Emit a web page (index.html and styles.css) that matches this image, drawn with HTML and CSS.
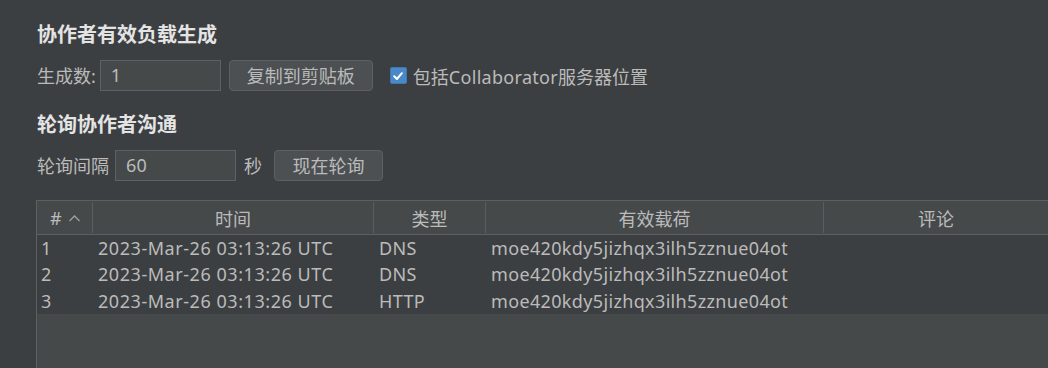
FILE: index.html
```html
<!DOCTYPE html>
<html lang="zh">
<head>
<meta charset="utf-8">
<link rel="stylesheet" href="styles.css">
</head>
<body>
<div class="page">
  <h2 class="title t1">协作者有效负载生成</h2>
  <div class="row r1">
    <span class="label">生成数:</span>
    <div class="input in1">1</div>
    <button class="btn b1">复制到剪贴板</button>
    <label class="check">
      <span class="box"><svg width="12" height="12" viewBox="0 0 12 12"><path d="M2.2 6.3 L4.9 9 L9.9 3.2" fill="none" stroke="#fff" stroke-width="2" stroke-linecap="round" stroke-linejoin="round"/></svg></span>
      <span class="clabel">包括<span class="lat">Collaborator</span>服务器位置</span>
    </label>
  </div>
  <h2 class="title t2">轮询协作者沟通</h2>
  <div class="row r2">
    <span class="label">轮询间隔</span>
    <div class="input in2">60</div>
    <span class="label sec">秒</span>
    <button class="btn b2">现在轮询</button>
  </div>
  <div class="table">
    <div class="thead">
      <div class="th c1"><span class="lat">#</span><svg class="sort" width="13" height="8" viewBox="0 0 13 8"><path d="M1.5 7 L6.5 2 L11.5 7" fill="none" stroke="#a0a0a0" stroke-width="1.3"/></svg></div>
      <div class="th c2">时间</div>
      <div class="th c3">类型</div>
      <div class="th c4">有效载荷</div>
      <div class="th c5">评论</div>
    </div>
    <div class="tbody">
      <div class="tr"><div class="td c1">1</div><div class="td c2">2023-Mar-26 03:13:26 UTC</div><div class="td c3">DNS</div><div class="td c4">moe420kdy5jizhqx3ilh5zznue04ot</div><div class="td c5"></div></div>
      <div class="tr"><div class="td c1">2</div><div class="td c2">2023-Mar-26 03:13:26 UTC</div><div class="td c3">DNS</div><div class="td c4">moe420kdy5jizhqx3ilh5zznue04ot</div><div class="td c5"></div></div>
      <div class="tr"><div class="td c1">3</div><div class="td c2">2023-Mar-26 03:13:26 UTC</div><div class="td c3">HTTP</div><div class="td c4">moe420kdy5jizhqx3ilh5zznue04ot</div><div class="td c5"></div></div>
      <div class="empty"></div>
    </div>
  </div>
</div>
</body>
</html>
```

FILE: styles.css
```css
html, body {
  margin: 0;
  padding: 0;
  background: #3c3f41;
  overflow: hidden;
}
body {
  width: 1048px;
  height: 368px;
  font-family: "Noto Sans", "Noto Sans CJK SC", sans-serif;
  font-size: 18px;
  color: #bbbbbb;
}
.page {
  padding: 21px 0 0 36px;
  display: flex;
  flex-direction: column;
  height: 347px;
  overflow: hidden;
}
.lat { letter-spacing: 0.3px; }
.title {
  margin: 0 0 0 1px;
  font-size: 20px;
  font-weight: bold;
  color: #e4e4e4;
  line-height: 28px;
  height: 28px;
  flex: none;
}
.t2 { margin-top: 20px; }
.row {
  display: flex;
  align-items: center;
  height: 31px;
  margin-left: 1px;
  flex: none;
}
.r1 { margin-top: 11px; }
.r2 { margin-top: 11px; }
.label { line-height: 22px; }
.input {
  box-sizing: border-box;
  height: 31px;
  width: 121px;
  background: #45494a;
  border: 1px solid #5e6164;
  padding: 0 10px;
  line-height: 29px;
  color: #bbbbbb;
  letter-spacing: 0.3px;
}
.in1 { margin-left: 4px; }
.in2 { margin-left: 6px; }
.btn {
  box-sizing: border-box;
  height: 31px;
  background: #4c5052;
  border: 1px solid #5e6060;
  border-radius: 4px;
  color: #bbbbbb;
  font-family: inherit;
  font-size: 18px;
  line-height: 22px;
  padding: 0;
}
.b1 { width: 144px; margin-left: 8px; }
.sec { margin-left: 8px; }
.b2 { width: 109px; margin-left: 12px; }
.check {
  display: flex;
  align-items: center;
  margin-left: 17px;
}
.box {
  width: 17px;
  height: 17px;
  background: #4a88c7;
  border-radius: 2px;
  display: flex;
  align-items: center;
  justify-content: center;
  border: 1px solid #3f79b3;
  box-sizing: border-box;
}
.clabel { margin-left: 6px; }
.table {
  margin-top: 19px;
  border-top: 1px solid #5e6060;
  border-left: 1px solid #5e6060;
  flex: 1;
  display: flex;
  flex-direction: column;
}
.thead {
  display: flex;
  height: 33px;
  flex: none;
  background: #45494a;
  border-bottom: 1px solid #5e6060;
}
.th {
  box-sizing: border-box;
  display: flex;
  align-items: center;
  justify-content: center;
  height: 31px;
  margin-top: 1px;
  border-right: 1px solid #5a5d5f;
}
.th.c5 { border-right: none; }
.c1 { width: 56px; flex: none; }
.c2 { width: 281px; flex: none; }
.c3 { width: 112px; flex: none; }
.c4 { width: 338px; flex: none; }
.c5 { flex: 1; }
.th.c1 { padding-left: 2px; }
.sort { margin-left: 6px; margin-top: 1px; }
.tbody {
  flex: 1;
  display: flex;
  flex-direction: column;
}
.tr {
  display: flex;
  height: 26.4px;
  line-height: 26px;
  background: #3c3f41;
  flex: none;
}
.td {
  box-sizing: border-box;
  padding-left: 5px;
  white-space: nowrap;
  letter-spacing: 0.35px;
}
.td.c2 { letter-spacing: 0.55px; }
.td.c1 { padding-left: 4px; }
.empty {
  flex: 1;
  background: #45494a;
}
```
